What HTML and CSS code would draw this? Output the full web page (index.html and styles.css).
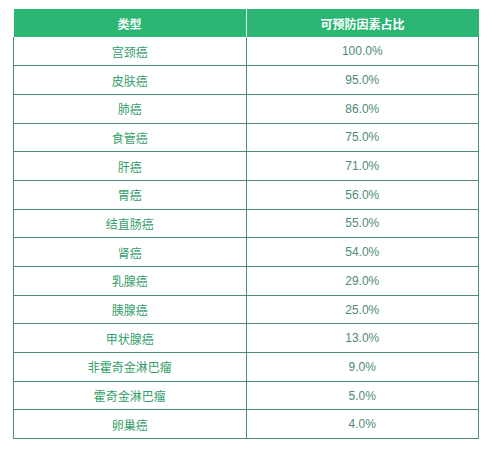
FILE: index.html
```html
<!DOCTYPE html>
<html lang="zh-CN">
<head>
  <meta charset="UTF-8">
  <meta name="viewport" content="width=device-width, initial-scale=1.0">
  <title>可预防因素占比</title>
  <link rel="stylesheet" href="styles.css">
</head>
<body>
  <table class="cancer-table">
    <thead>
      <tr>
        <th>类型</th>
        <th>可预防因素占比</th>
      </tr>
    </thead>
    <tbody>
      <tr><td class="type">宫颈癌</td><td class="pct">100.0%</td></tr>
      <tr><td class="type">皮肤癌</td><td class="pct">95.0%</td></tr>
      <tr><td class="type">肺癌</td><td class="pct">86.0%</td></tr>
      <tr><td class="type">食管癌</td><td class="pct">75.0%</td></tr>
      <tr><td class="type">肝癌</td><td class="pct">71.0%</td></tr>
      <tr><td class="type">胃癌</td><td class="pct">56.0%</td></tr>
      <tr><td class="type">结直肠癌</td><td class="pct">55.0%</td></tr>
      <tr><td class="type">肾癌</td><td class="pct">54.0%</td></tr>
      <tr><td class="type">乳腺癌</td><td class="pct">29.0%</td></tr>
      <tr><td class="type">胰腺癌</td><td class="pct">25.0%</td></tr>
      <tr><td class="type">甲状腺癌</td><td class="pct">13.0%</td></tr>
      <tr><td class="type">非霍奇金淋巴瘤</td><td class="pct">9.0%</td></tr>
      <tr><td class="type">霍奇金淋巴瘤</td><td class="pct">5.0%</td></tr>
      <tr><td class="type">卵巢癌</td><td class="pct">4.0%</td></tr>
    </tbody>
  </table>
</body>
</html>
```

FILE: styles.css
```css
* {
  margin: 0;
  padding: 0;
  box-sizing: border-box;
}

body {
  background: #fff;
  font-family: "Liberation Sans", "Noto Sans CJK SC", sans-serif;
  padding: 9px 0 0 13px;
}

.cancer-table {
  width: 466px;
  border-collapse: collapse;
  table-layout: fixed;
  font-size: 12px;
}

.cancer-table th {
  background: #2bb673;
  color: #fff;
  font-weight: bold;
  height: 28px;
  text-align: center;
  border-right: 1px solid #e8f7ef;
}

.cancer-table th:last-child {
  border-right: none;
}

.cancer-table td {
  height: 28.7px;
  text-align: center;
  border: 1px solid #4d8b76;
  border-top: none;
}

.cancer-table td.type {
  width: 234px;
  color: #35a06a;
}

.cancer-table td.pct {
  color: #4f8a76;
}
```
